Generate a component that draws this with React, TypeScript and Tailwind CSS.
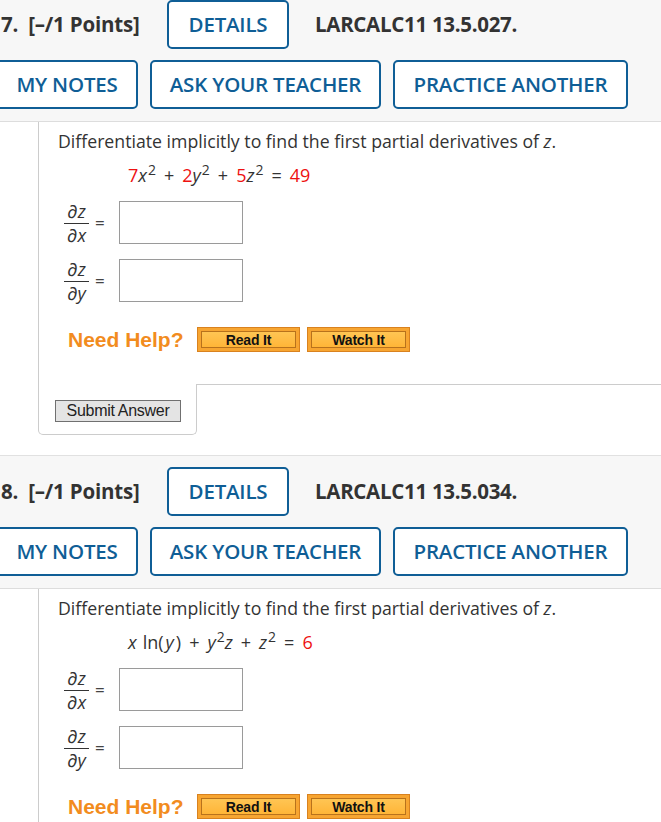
import React from "react";

const BLUE = "text-[#0f5e96] border-[#0f5e96]";

function OutlineBtn({ children, w }: { children: React.ReactNode; w: string }) {
  return (
    <div
      className={`${w} h-[49px] shrink-0 flex items-center justify-center border-2 rounded-[5px] ${BLUE} bg-white font-semibold text-[20.5px] tracking-[-0.2px]`}
    >
      {children}
    </div>
  );
}

function HelpBtn({ label }: { label: string }) {
  return (
    <div className="w-[103px] h-[25px] bg-[#f7a531] border border-[#d9821f] p-[3px] shrink-0">
      <div className="w-full h-full border border-[#b8721c] bg-gradient-to-b from-[#ffc553] to-[#ffb537] flex items-center justify-center text-[14px] font-bold text-[#111] leading-none [font-family:'Liberation_Sans',Arial,sans-serif] tracking-[-0.2px]">
        {label}
      </div>
    </div>
  );
}

function Frac({ d }: { d: string }) {
  return (
    <div className="flex flex-col items-center w-[25px] text-[18px] text-[#333]">
      <div className="leading-[18px]">
        ∂<i>z</i>
      </div>
      <div className="w-full border-t border-[#333] mt-[3px] mb-[2px]" />
      <div className="leading-[18px]">
        ∂<i>{d}</i>
      </div>
    </div>
  );
}

function AnswerRow({ d, mt }: { d: string; mt: string }) {
  return (
    <div className={`flex items-center pl-[6px] ${mt}`}>
      <Frac d={d} />
      <span className="ml-[6px] text-[17px] text-[#444]">=</span>
      <div className="ml-[14px] w-[124px] h-[43px] border border-[#9a9a9a] bg-white" />
    </div>
  );
}

function Sup({ children }: { children: React.ReactNode }) {
  return <sup className="text-[14px] -top-[7px] ml-[1px]">{children}</sup>;
}

const Op = ({ children }: { children: React.ReactNode }) => (
  <span className="mx-[8px]">{children}</span>
);

function Question({
  num,
  code,
  equation,
  first,
}: {
  num: string;
  code: string;
  equation: React.ReactNode;
  first?: boolean;
}) {
  return (
    <section className={first ? "-mt-[12px]" : ""}>
      <div className="bg-[#f7f7f7] border-t border-[#e1e1e1] pt-[11px] pb-[12px] border-b border-b-[#dddddd]">
        <div className="flex items-center h-[49px]">
          <div className="w-[167px] shrink-0 pl-[1px] text-[#333] font-bold text-[20.5px] tracking-[-0.2px] whitespace-nowrap">
            {num}
            <span className="ml-[10px]">[–/1 Points]</span>
          </div>
          <OutlineBtn w="w-[122px]">DETAILS</OutlineBtn>
          <div className="ml-[26px] text-[#333] font-bold text-[20.5px] tracking-[-0.3px] whitespace-nowrap">
            {code}
          </div>
        </div>
        <div className="flex gap-[12px] mt-[11px] -ml-[4px]">
          <OutlineBtn w="w-[142px]">MY NOTES</OutlineBtn>
          <OutlineBtn w="w-[231px]">ASK YOUR TEACHER</OutlineBtn>
          <OutlineBtn w="w-[235px]">PRACTICE ANOTHER</OutlineBtn>
        </div>
      </div>
      <div className="bg-white">
        <div className="ml-[38px] border-l border-[#cccccc] pl-[19px] pt-[7px] pb-[32px]">
          <div className="text-[17.7px] leading-[24px] text-[#333] whitespace-nowrap">
            Differentiate implicitly to find the first partial derivatives of <i>z</i>.
          </div>
          <div className="mt-[10px] pl-[70px] h-[24px] text-[18px] leading-[24px] text-[#333] whitespace-nowrap">
            {equation}
          </div>
          <AnswerRow d="x" mt="mt-[14px]" />
          <AnswerRow d="y" mt="mt-[15px]" />
          <div className="mt-[25px] flex items-center pl-[10px]">
            <span className="w-[129px] shrink-0 text-[21px] font-bold text-[#f28c1e] leading-none [font-family:'Liberation_Sans',Arial,sans-serif]">
              Need Help?
            </span>
            <HelpBtn label="Read It" />
            <div className="w-[7px]" />
            <HelpBtn label="Watch It" />
          </div>
        </div>
        {first && (
          <div className="flex pb-[20px]">
            <div className="ml-[38px] w-[159px] h-[51px] shrink-0 border-l border-r border-b border-[#cccccc] rounded-b-[5px] pl-[16px] pt-[16px]">
              <div className="w-[126px] h-[22px] bg-[#e4e4e4] border border-[#707070] flex items-center justify-center text-[16px] text-[#222] [font-family:'Liberation_Sans',Arial,sans-serif] tracking-[-0.3px]">
                Submit Answer
              </div>
            </div>
            <div className="flex-1 border-t border-[#cccccc]" />
          </div>
        )}
      </div>
    </section>
  );
}

const R = ({ children }: { children: React.ReactNode }) => (
  <span className="text-[#ee1111]">{children}</span>
);

export default function App() {
  return (
    <div className="w-[661px] h-[822px] overflow-hidden bg-white [font-family:'Open_Sans',sans-serif]">
      <Question
        first
        num="7."
        code="LARCALC11 13.5.027."
        equation={
          <>
            <R>7</R>
            <i>x</i>
            <Sup>2</Sup>
            <Op>+</Op>
            <R>2</R>
            <i>y</i>
            <Sup>2</Sup>
            <Op>+</Op>
            <R>5</R>
            <i>z</i>
            <Sup>2</Sup>
            <Op>=</Op>
            <R>49</R>
          </>
        }
      />
      <Question
        num="8."
        code="LARCALC11 13.5.034."
        equation={
          <>
            <i>x</i>
            <span className="ml-[6px]">ln(</span>
            <i className="px-[2px]">y</i>)<Op>+</Op>
            <i>y</i>
            <Sup>2</Sup>
            <i>z</i>
            <Op>+</Op>
            <i>z</i>
            <Sup>2</Sup>
            <Op>=</Op>
            <R>6</R>
          </>
        }
      />
    </div>
  );
}
